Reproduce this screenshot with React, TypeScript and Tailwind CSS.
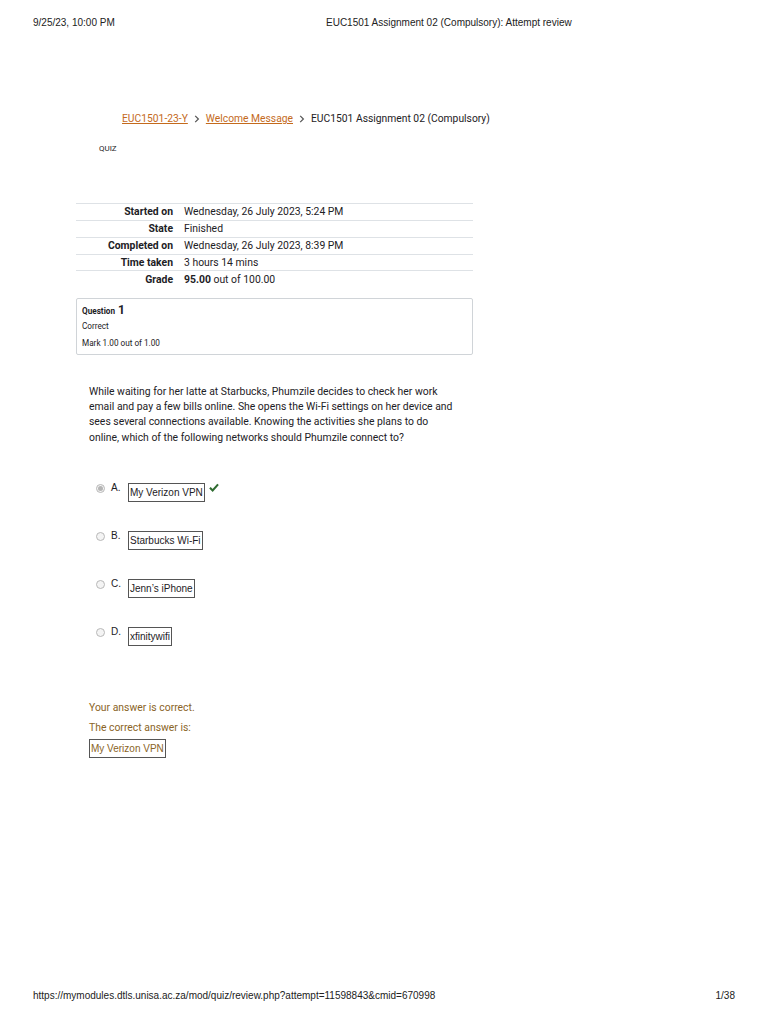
import React from "react";

const Radio = ({ checked }: { checked?: boolean }) => (
  <span className="mt-[1px] flex h-[9px] w-[9px] items-center justify-center rounded-full border border-[#b8b8b8] bg-[#f4f4f4]">
    {checked && <span className="h-[5px] w-[5px] rounded-full bg-[#b5b5b5]" />}
  </span>
);

const Option = ({ letter, text, checked, correct }: { letter: string; text: string; checked?: boolean; correct?: boolean }) => (
  <div className="flex h-[48px] items-start">
    <div className="w-[11px]">
      <Radio checked={checked} />
    </div>
    <span className="ml-[4px] w-[17px] text-[10px] leading-[10px] text-[#1d2125]" style={{ fontFamily: '"Liberation Sans", Arial, sans-serif' }}>{letter}</span>
    <span className="border border-[#555] px-[1px] text-[10px] leading-[17px] text-[#1d2125]" style={{ fontFamily: '"Liberation Sans", Arial, sans-serif' }}>
      {text}
    </span>
    {correct && (
      <svg className="ml-[4px] mt-[0px]" width="10" height="9" viewBox="0 0 11 10">
        <path d="M1 5.2 L4 8.2 L10 1.5" fill="none" stroke="#2e6b30" strokeWidth="2.3" />
      </svg>
    )}
  </div>
);

const rows: [string, React.ReactNode][] = [
  ["Started on", "Wednesday, 26 July 2023, 5:24 PM"],
  ["State", "Finished"],
  ["Completed on", "Wednesday, 26 July 2023, 8:39 PM"],
  ["Time taken", "3 hours 14 mins"],
  ["Grade", <><span className="font-bold">95.00</span> out of 100.00</>],
];

const Chevron = () => (
  <svg className="mx-[6px]" width="6" height="8" viewBox="0 0 6 8"><path d="M1.2 0.8 L4.4 4 L1.2 7.2" fill="none" stroke="#555" strokeWidth="1.2" /></svg>
);

export default function App() {
  return (
    <div className="flex h-[1024px] w-[768px] flex-col bg-white" style={{ fontFamily: 'Roboto, "Liberation Sans", sans-serif' }}>
      <div className="flex h-[44px] items-center px-[33px] text-[10px] text-[#222]" style={{ fontFamily: '"Liberation Sans", Arial, sans-serif' }}>
        <span className="w-[293px]">9/25/23, 10:00 PM</span>
        <span>EUC1501 Assignment 02 (Compulsory): Attempt review</span>
      </div>

      <div className="mt-[67px] flex items-center pl-[122px] text-[10.3px] text-[#1d2125]">
        <span className="text-[#c46a1c] underline">EUC1501-23-Y</span>
        <Chevron />
        <span className="text-[#c46a1c] underline">Welcome Message</span>
        <Chevron />
        <span>EUC1501 Assignment 02 (Compulsory)</span>
      </div>

      <div className="mt-[16px] pl-[99px] text-[8px] leading-[14px] text-[#1d2125]">QUIZ</div>

      <div className="ml-[76px] mt-[47px] w-[397px] border-t border-[#dee2e6]">
        {rows.map(([k, v], i) => (
          <div key={k} className={`flex h-[16.7px] items-center text-[10.4px] text-[#1d2125] ${i < 4 ? "border-b border-[#dee2e6]" : ""}`}>
            <span className="w-[97px] text-right font-bold">{k}</span>
            <span className="ml-[11px]">{v}</span>
          </div>
        ))}
      </div>

      <div className="ml-[76px] mt-[10px] flex h-[57px] w-[397px] flex-col rounded-[2px] border border-[#d0d4d8] pl-[5px] pt-[4px] text-[8.2px] text-[#1d2125]">
        <div className="flex items-baseline leading-[14px]">
          <span className="font-bold">Question</span>
          <span className="ml-[3px] text-[12px] font-bold">1</span>
        </div>
        <div className="mt-[3px] leading-[11px]">Correct</div>
        <div className="mt-[6px] leading-[11px]">Mark 1.00 out of 1.00</div>
      </div>

      <div className="ml-[89px] mt-[29px] w-[366px] text-[10.4px] leading-[15.3px] text-[#1d2125]">
        While waiting for her latte at Starbucks, Phumzile decides to check her work email and pay a few bills online. She opens the Wi-Fi settings on her device and sees several connections available. Knowing the activities she plans to do online, which of the following networks should Phumzile connect to?
      </div>

      <div className="ml-[96px] mt-[38px] flex flex-col">
        <Option letter="A." text="My Verizon VPN" checked correct />
        <Option letter="B." text="Starbucks Wi-Fi" />
        <Option letter="C." text="Jenn’s iPhone" />
        <Option letter="D." text="xfinitywifi" />
      </div>

      <div className="ml-[89px] mt-[27px] flex flex-col items-start text-[10.4px] text-[#8a6426]">
        <div className="leading-[12px]">Your answer is correct.</div>
        <div className="mt-[8px] leading-[12px]">The correct answer is:</div>
        <div className="mt-[5px] border border-[#555] px-[1px] text-[10px] leading-[17px]" style={{ fontFamily: '"Liberation Sans", Arial, sans-serif' }}>My Verizon VPN</div>
      </div>

      <div className="flex-1" />
      <div className="flex h-[36px] items-start justify-between px-[33px] text-[10px] text-[#222]" style={{ fontFamily: '"Liberation Sans", Arial, sans-serif' }}>
        <span>https://mymodules.dtls.unisa.ac.za/mod/quiz/review.php?attempt=11598843&amp;cmid=670998</span>
        <span>1/38</span>
      </div>
    </div>
  );
}
